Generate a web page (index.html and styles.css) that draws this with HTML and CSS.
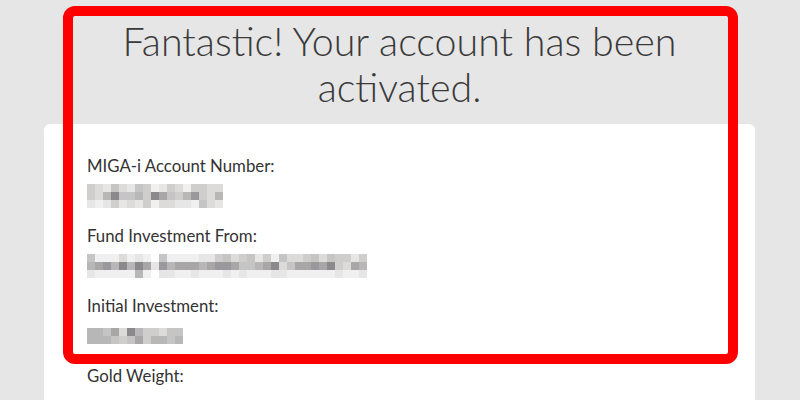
FILE: index.html
```html
<!DOCTYPE html>
<html lang="en">
<head>
<meta charset="utf-8">
<title>Account activated</title>
<link rel="stylesheet" href="styles.css">
</head>
<body>
<div class="page">
  <h1 class="title">Fantastic! Your account has been activated.</h1>
  <div class="card">
    <div class="field">
      <div class="label">MIGA-i Account Number:</div>
      <div class="value"><div class="blur" data-rows="32142143013203322|32584453864357325|10131213022110421"></div></div>
    </div>
    <div class="field">
      <div class="label">Fund Investment From:</div>
      <div class="value"><div class="blur" data-rows="40002010w40000113423413042234243313|56758586175666567764456824667683265|10000050w1100100010100011000000100"></div></div>
    </div>
    <div class="field">
      <div class="label">Initial Investment:</div>
      <div class="value"><div class="blur" data-rows="554628533244|555434635545"></div></div>
    </div>
    <div class="field">
      <div class="label">Gold Weight:</div>
      <div class="value"></div>
    </div>
  </div>
</div>
<div class="highlight"></div>
<script src="script.js"></script>
</body>
</html>
```

FILE: styles.css
```css
html, body {
  margin: 0;
  padding: 0;
  background: #e6e6e6;
}

body {
  font-family: Lato, "Open Sans", "Liberation Sans", sans-serif;
  color: #333;
  overflow: hidden;
}

.page {
  width: 711px;
  padding-left: 44px;
  padding-top: 18px;
}

.title {
  margin: 0 0 14px;
  padding: 0 50px;
  font-size: 39.4px;
  line-height: 46px;
  font-weight: 300;
  text-align: center;
  color: #3a3a3a;
}

.card {
  background: #ffffff;
  border-radius: 6px;
  padding: 28px 43px 0;
  height: 320px;
}

.field {
  margin-bottom: 11px;
}

.label {
  font-size: 16.8px;
  line-height: 27px;
  color: #333;
}

.value {
  margin-top: 2px;
  height: 30px;
  display: flex;
  align-items: center;
}

.blur {
  display: grid;
  grid-auto-rows: 8px;
}

.blur span { display: block; }
.p0 { background: #f0f0f0; }
.p1 { background: #e6e6e6; }
.p2 { background: #dcdbda; }
.p3 { background: #d0cecc; }
.p4 { background: #c6c5c5; }
.p5 { background: #b8b7b7; }
.p6 { background: #a8a6a6; }
.p7 { background: #9a989c; }
.p8 { background: #8b898b; }
.pw { background: #ffffff; }

.highlight {
  position: absolute;
  left: 63px;
  top: 6px;
  width: 675px;
  height: 358px;
  box-sizing: border-box;
  border: 10px solid #ff0000;
  border-radius: 12px;
  pointer-events: none;
}
```

FILE: script.js
```js
document.querySelectorAll('.blur').forEach(function (el) {
  var rows = el.getAttribute('data-rows').split('|');
  var n = rows[0].length;
  el.style.gridTemplateColumns = 'repeat(' + n + ', 8px)';
  rows.forEach(function (row) {
    for (var i = 0; i < n; i++) {
      var s = document.createElement('span');
      s.className = 'p' + (row.charAt(i) || '1');
      el.appendChild(s);
    }
  });
});
```
